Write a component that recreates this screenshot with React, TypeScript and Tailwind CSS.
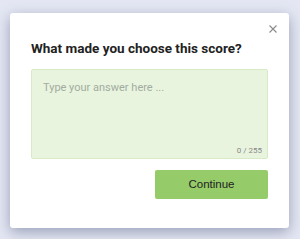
import React, { useState } from 'react'

const App: React.FC = () => {
  const [answer, setAnswer] = useState('')

  return (
    <div className="w-[300px] h-[239px] bg-[#e4e7f3] pt-[13px] pl-[10px] overflow-hidden" style={{ fontFamily: 'Roboto, "Liberation Sans", sans-serif' }}>
      <div className="relative w-[279px] h-[215px] bg-white rounded-[3px] shadow-[0_4px_14px_rgba(60,70,110,0.45)] pl-[21px] pt-[27px]">
        <button className="absolute top-[10px] right-[10px] w-[12px] h-[12px] flex items-center justify-center text-[#8a8a8a]">
          <svg width="8" height="8" viewBox="0 0 8 8" fill="none" stroke="currentColor" strokeWidth="1.1">
            <path d="M0.5 0.5L7.5 7.5M7.5 0.5L0.5 7.5" />
          </svg>
        </button>
        <h2 className="text-[13.5px] leading-[16px] font-bold text-[#222]">What made you choose this score?</h2>
        <div className="relative mt-[13px] w-[237px] h-[90px]">
          <textarea
            value={answer}
            onChange={(e) => setAnswer(e.target.value)}
            placeholder="Type your answer here ..."
            className="block w-full h-full resize-none bg-[#e8f4de] border border-[#d6ebc6] rounded-[2px] px-[11px] pt-[11px] text-[11px] leading-[14px] text-[#333] placeholder:text-[#a3aca0] outline-none"
          />
          <span className="absolute right-[6px] bottom-[4px] text-[8px] leading-[9px] text-[#888]">{answer.length} / 255</span>
        </div>
        <div className="flex justify-end w-[237px] mt-[11px]">
          <button
            className="w-[113px] h-[29px] bg-[#95cb69] rounded-[2px] text-[11.5px] text-[#222]"
            style={{ fontFamily: '"Liberation Sans", Arial, sans-serif' }}
          >
            Continue
          </button>
        </div>
      </div>
    </div>
  )
}

export default App
